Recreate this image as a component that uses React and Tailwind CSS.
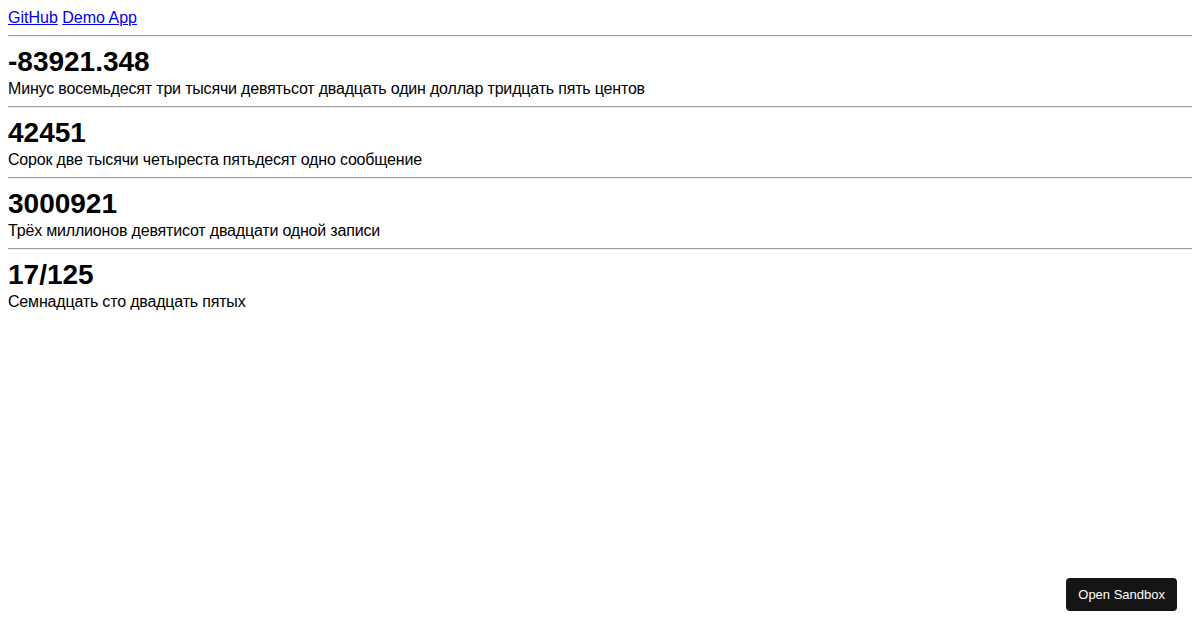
import React from "react";

const items = [
  { n: "-83921.348", t: "Минус восемьдесят три тысячи девятьсот двадцать один доллар тридцать пять центов" },
  { n: "42451", t: "Сорок две тысячи четыреста пятьдесят одно сообщение" },
  { n: "3000921", t: "Трёх миллионов девятисот двадцати одной записи" },
  { n: "17/125", t: "Семнадцать сто двадцать пятых" },
];

export default function App() {
  return (
    <div className="min-h-[630px] bg-white px-2 pt-[9px] pb-2 text-black text-[16px] leading-[normal] font-['Liberation_Sans',Arial,sans-serif]">
      <div className="leading-[normal]">
        <a href="#" className="text-[#0000ee] underline">GitHub</a>{" "}
        <a href="#" className="text-[#0000ee] underline">Demo App</a>
      </div>
      {items.map((it) => (
        <div key={it.n}>
          <hr className="my-2 h-0 border-0 border-t border-b border-t-[#9a9a9a] border-b-[#eeeeee]" />
          <h2 className="m-0 text-[28px] font-bold leading-[33px]">{it.n}</h2>
          <p className="mt-[2px] leading-[normal] tracking-[-0.18px]">{it.t}</p>
        </div>
      ))}
      <button className="fixed bottom-[19px] right-[23px] h-[33px] px-3 rounded-[4px] bg-[#151515] text-white text-[13px] font-['Liberation_Sans',Arial,sans-serif]">
        Open Sandbox
      </button>
    </div>
  );
}
